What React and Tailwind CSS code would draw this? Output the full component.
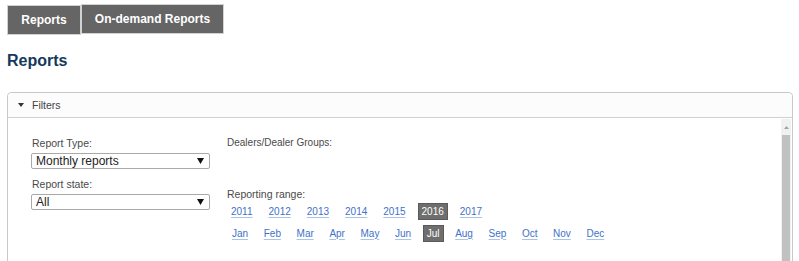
import React from "react";

const years = ["2011", "2012", "2013", "2014", "2015", "2016", "2017"];
const months = ["Jan", "Feb", "Mar", "Apr", "May", "Jun", "Jul", "Aug", "Sep", "Oct", "Nov", "Dec"];

function LinkItem({ label, selected }) {
  if (selected) {
    return (
      <span className="h-[17px] px-1 flex items-center bg-[#6e6e6e] shadow-[inset_0_0_0_1px_#5a5a5a] text-white leading-none">
        {label}
      </span>
    );
  }
  return (
    <span className="h-[17px] px-1 flex items-center text-[#3f71c8] underline decoration-[#a9c4ec] underline-offset-2 leading-none">
      {label}
    </span>
  );
}

function Select({ value }) {
  return (
    <div className="w-[179px] h-[16px] border border-[#a9a9a9] rounded-[2px] bg-white flex items-center justify-between pl-[4px] pr-[5px]">
      <span className="text-[12px] leading-none text-[#222]">{value}</span>
      <svg width="7" height="6" viewBox="0 0 7 6">
        <path d="M0 0 L7 0 L3.5 6 Z" fill="#111" />
      </svg>
    </div>
  );
}

export default function App() {
  return (
    <div
      className="w-[799px] h-[261px] overflow-hidden bg-white"
      style={{ fontFamily: '"Liberation Sans", Arial, sans-serif' }}
    >
      <div className="flex items-start pl-[7px]">
        <div className="mt-[5px] w-[74px] h-[30px] bg-[#656565] border border-[#d2d2d2] flex items-center justify-center text-white font-bold text-[12px]">
          Reports
        </div>
        <div className="mt-[4px] w-[143px] h-[30px] bg-[#656565] border border-[#d2d2d2] flex items-center justify-center text-white font-bold text-[12px]">
          On-demand Reports
        </div>
      </div>

      <h1 className="mt-[16px] ml-[7px] text-[16px] leading-[20px] font-bold text-[#15395c]">Reports</h1>

      <div className="mt-[21px] ml-[7px] w-[786px] border border-[#c8c8c8] rounded-t-[4px]">
        <div className="h-[25px] bg-[#fcfcfc] border-b border-[#d0d0d0] rounded-t-[4px] flex items-center">
          <svg className="ml-[10px]" width="6" height="4" viewBox="0 0 6 4">
            <path d="M0 0 L6 0 L3 4 Z" fill="#333" />
          </svg>
          <span className="ml-[8px] text-[10.5px] leading-[12px] text-[#444]">Filters</span>
        </div>
        <div className="flex h-[160px]">
          <div className="flex-1 flex pt-[19px] pl-[23px]">
            <div className="flex flex-col w-[196px]">
              <span className="text-[10.5px] leading-[12px] text-[#4a4a4a] ml-[1px]">Report Type:</span>
              <div className="mt-[4px]">
                <Select value="Monthly reports" />
              </div>
              <span className="mt-[9px] text-[10.5px] leading-[12px] text-[#4a4a4a] ml-[1px]">Report state:</span>
              <div className="mt-[4px]">
                <Select value="All" />
              </div>
            </div>
            <div className="flex flex-col">
              <span className="text-[10px] leading-[12px] text-[#4a4a4a]">Dealers/Dealer Groups:</span>
              <span className="mt-[39px] text-[10.5px] leading-[12px] text-[#4a4a4a]">Reporting range:</span>
              <div className="mt-[3px] flex gap-2 text-[10px]">
                {years.map((y) => (
                  <LinkItem key={y} label={y} selected={y === "2016"} />
                ))}
              </div>
              <div className="mt-[5px] ml-[1px] flex gap-[7.6px] text-[10px]">
                {months.map((m) => (
                  <LinkItem key={m} label={m} selected={m === "Jul"} />
                ))}
              </div>
            </div>
          </div>
          <div className="mt-[1px] mr-[1px] w-[10px] bg-[#f1f1f1] flex flex-col">
            <div className="h-[16px] flex items-center justify-center">
              <svg width="5" height="3" viewBox="0 0 5 3">
                <path d="M0 3 L5 3 L2.5 0 Z" fill="#a3a3a3" />
              </svg>
            </div>
            <div className="flex-1 mx-[1px] bg-[#c1c1c1]" />
          </div>
        </div>
      </div>
    </div>
  );
}
